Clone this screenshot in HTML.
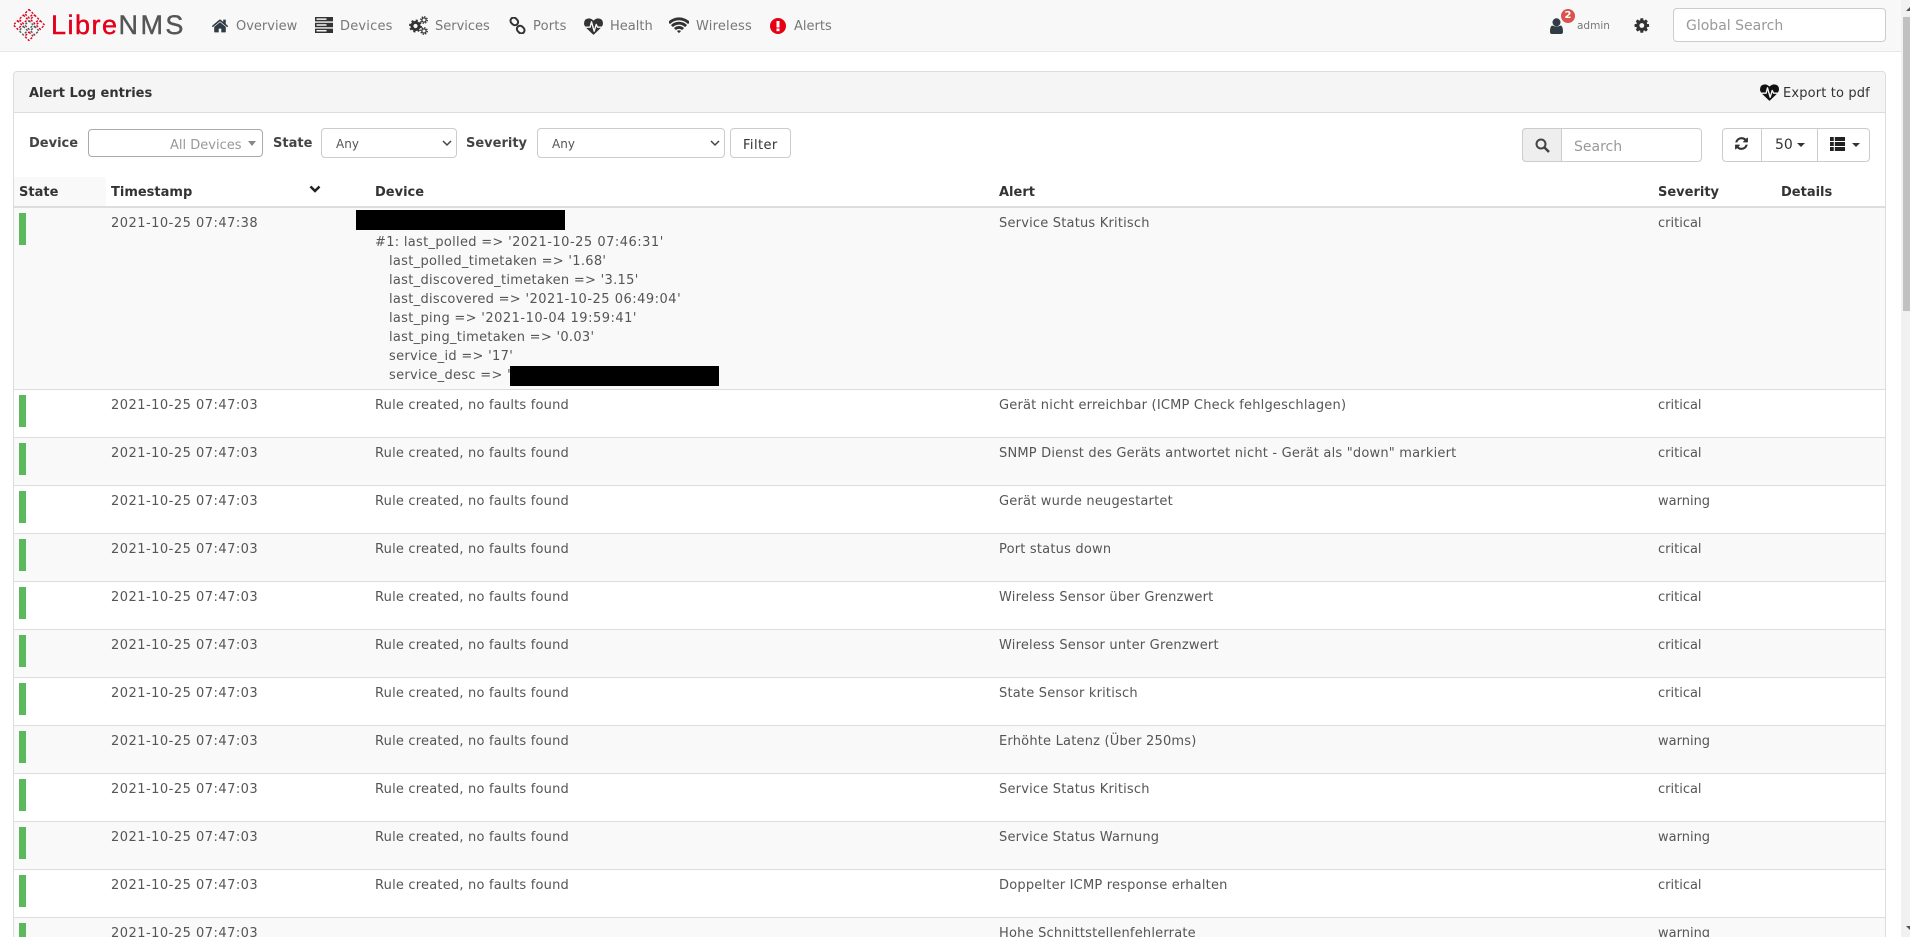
<!DOCTYPE html>
<html lang="en">
<head>
<meta charset="utf-8">
<title>Alert Log entries</title>
<style>
*{box-sizing:border-box}
html,body{margin:0;padding:0;width:1910px;height:937px;overflow:hidden;background:#fff}
body{position:relative;font-family:"DejaVu Sans","Liberation Sans",sans-serif;font-size:13px;color:#555}
.a{position:absolute;white-space:pre;line-height:20px}
svg{position:absolute;display:block}
#nav{position:absolute;left:0;top:0;width:1901px;height:52px;background:#f8f8f8;border-bottom:1px solid #e7e7e7}
.n{color:#777;top:17px}
.panel{position:absolute;left:13px;top:71px;width:1873px;height:880px;border:1px solid #ddd;border-radius:4px;background:#fff}
.head{position:absolute;left:14px;top:72px;width:1871px;height:41px;background:#f5f5f5;border-bottom:1px solid #ddd;border-radius:3px 3px 0 0}
.b{font-weight:bold;color:#333}
.box{position:absolute;border:1px solid #ccc;border-radius:4px;background:#fff}
.row{position:absolute;left:14px;width:1871px;height:48px;border-top:1px solid #ddd}
.o{background:#f9f9f9}
.e{background:#fff}
.row i{position:absolute;left:5px;top:5px;width:7px;height:32px;background:#5cb85c}
.row span{position:absolute;top:6px;line-height:20px;white-space:pre;color:#555}
.t{left:97px;letter-spacing:.48px}
.d{left:361px;letter-spacing:.2px}
.l{left:985px;letter-spacing:.2px}
.s{left:1644px}
.dl{letter-spacing:.3px;color:#555}
.dl u{text-decoration:none;letter-spacing:.5px}
</style>
</head>
<body>
<div id="nav"></div>

<!-- logo -->
<svg style="left:13px;top:9px" width="32" height="32" viewBox="0 0 32 32">
<g transform="rotate(45 16 16)" fill="none" stroke-width="1.400" stroke-dasharray="2.200 1.600">
<rect x="5" y="5" width="6" height="6" stroke="#e2001a"/>
<rect x="13" y="5" width="6" height="6" stroke="#e2001a"/>
<rect x="21" y="5" width="6" height="6" stroke="#e2001a"/>
<rect x="5" y="13" width="6" height="6" stroke="#e2001a"/>
<rect x="13" y="13" width="6" height="6" stroke="#555"/>
<rect x="21" y="13" width="6" height="6" stroke="#555"/>
<rect x="5" y="21" width="6" height="6" stroke="#e2001a"/>
<rect x="13" y="21" width="6" height="6" stroke="#555"/>
<rect x="21" y="21" width="6" height="6" stroke="#e2001a"/>
</g>
</svg>
<div class="a" style="left:51px;top:10px;font:27px/30px 'Liberation Sans',sans-serif;letter-spacing:1.500px;color:#e2001a;-webkit-text-stroke:.4px #e2001a">Libre<span style="color:#555;-webkit-text-stroke:.4px #555;letter-spacing:2.400px">NMS</span></div>

<!-- nav icons -->
<svg style="left:211px;top:17px" width="18" height="18" viewBox="0 0 1792 1792"><path fill="#2f3b45" d="M1472 992v480q0 26-19 45t-45 19h-384v-384h-256v384h-384q-26 0-45-19t-19-45v-480q0-1 .5-3t.5-3l575-474 575 474q1 2 1 6zm223-69l-62 74q-8 9-21 11h-3q-13 0-21-7l-692-577-692 577q-12 8-24 7-13-2-21-11l-62-74q-8-10-7-23.5t11-21.5l719-599q32-26 76-26t76 26l244 204v-195q0-14 9-23t23-9h192q14 0 23 9t9 23v408l219 182q10 8 11 21.5t-7 23.5z"/></svg>
<div class="a n" style="left:236px">Overview</div>

<svg style="left:315px;top:17px" width="18" height="16" viewBox="0 0 18 16"><g fill="#333"><path d="M0 0h18v4.400H0zM0 5.800h18v4.400H0zM0 11.600h18V16H0z"/></g><g fill="#f8f8f8"><path d="M1.500 1.400h10v1.500h-10zM1.500 7.200h10v1.500h-10zM1.500 13h10v1.500h-10z"/></g></svg>
<div class="a n" style="left:340px;letter-spacing:.2px">Devices</div>

<svg style="left:409px;top:16px" width="19" height="19" viewBox="0 0 19 19" fill="none" stroke="#333">
<circle cx="6.500" cy="10" r="3.600" stroke-width="3"/><circle cx="6.500" cy="10" r="5.600" stroke-width="1.800" stroke-dasharray="2.100 2.300"/>
<circle cx="15" cy="4" r="2.100" stroke-width="1.200"/><circle cx="15" cy="4" r="3.300" stroke-width="1.200" stroke-dasharray="1.400 1.200"/>
<circle cx="15" cy="15" r="2.100" stroke-width="1.200"/><circle cx="15" cy="15" r="3.300" stroke-width="1.200" stroke-dasharray="1.400 1.200"/>
</svg>
<div class="a n" style="left:435px">Services</div>

<svg style="left:509px;top:17px" width="17" height="17" viewBox="0 0 17 17" fill="none" stroke="#333" stroke-width="2"><rect x="1.200" y="1.200" width="8.200" height="6.400" rx="3.200" transform="rotate(45 5.300 4.400)"/><rect x="7.600" y="9.400" width="8.200" height="6.400" rx="3.200" transform="rotate(45 11.700 12.600)"/></svg>
<div class="a n" style="left:533px;letter-spacing:.2px">Ports</div>

<svg style="left:584px;top:17px" width="19" height="19" viewBox="0 0 1792 1792"><path fill="#333" d="M1280 1024h305q-5 6-10 10.500t-9 7.500l-3 4-623 600q-18 18-44 18t-44-18l-624-602q-5-2-21-20h369q22 0 39.500-13.500t22.500-34.500l70-281 190 667q6 20 23 33t39 13q21 0 38-13t23-33l146-485 56 112q18 35 57 35zm512-428q0 145-103 300h-369l-111-221q-8-17-25.500-27t-36.500-8q-45 5-56 46l-129 430-196-686q-6-20-23.500-33t-39.500-13-39 13.500-22 34.500l-116 464h-423q-103-155-103-300 0-220 127-344t351-124q62 0 126.500 21.500t120 58 95.500 68.500 76 68q36-36 76-68t95.500-68.500 120-58 126.500-21.500q224 0 351 124t127 344z"/></svg>
<div class="a n" style="left:610px">Health</div>

<svg style="left:669px;top:16px" width="20" height="20" viewBox="0 0 1792 1792"><path fill="#333" d="M896 1523q-20 0-93-73.500t-73-93.500q0-32 62.500-54t103.500-22 103.500 22 62.500 54q0 20-73 93.500t-93 73.500zm270-271q-2 0-40-25t-101.500-50-128.500-25-128.500 25-101 50-40.500 25q-18 0-93.500-75t-75.500-93q0-13 10-23 78-77 196-121t233-44 233 44 196 121q10 10 10 23 0 18-75.500 93t-93.500 75zm273-272q-11 0-23-8-136-105-252-154.500t-268-49.500q-85 0-170.500 22t-149 53-113.500 62-79 53-31 22q-17 0-92-75t-75-93q0-12 10-22 132-132 320-205t380-73 380 73 320 205q10 10 10 22 0 18-75 93t-92 75zm271-271q-11 0-22-9-179-157-371.500-236.500t-420.500-79.500-420.500 79.500-371.500 236.500q-11 9-22 9-17 0-92.500-75t-75.500-93q0-13 10-23 187-186 445-288t527-102 527 102 445 288q10 10 10 23 0 18-75.500 93t-92.500 75z"/></svg>
<div class="a n" style="left:696px;letter-spacing:.2px">Wireless</div>

<svg style="left:770px;top:18px" width="16" height="16" viewBox="0 0 16 16"><circle cx="8" cy="8" r="8" fill="#e60012"/><rect x="6.500" y="3" width="3" height="6.500" fill="#fff"/><rect x="6.500" y="10.500" width="3" height="2.700" fill="#fff"/></svg>
<div class="a n" style="left:794px">Alerts</div>

<!-- right nav -->
<svg style="left:1550px;top:18px" width="13" height="16" viewBox="0 0 13 16"><circle cx="6.500" cy="4.300" r="4" fill="#2f3b45"/><path fill="#2f3b45" d="M2.300 7.500C3.500 8.700 9.500 8.700 10.700 7.500 12.300 8 13 10 13 14c0 1.200-.8 2-2 2H2c-1.200 0-2-.8-2-2C0 10 .7 8 2.300 7.500z"/></svg>
<div style="position:absolute;left:1561px;top:9px;width:14px;height:14px;border-radius:7px;background:#d9534f;color:#fff;font-weight:bold;font-size:10px;line-height:14px;text-align:center">2</div>
<div class="a" style="left:1577px;top:16px;font-size:10.500px;color:#777">admin</div>
<svg style="left:1633px;top:17px" width="17" height="17" viewBox="0 0 1792 1792"><path fill="#333" transform="translate(32 0)" d="M1152 896q0-106-75-181t-181-75-181 75-75 181 75 181 181 75 181-75 75-181zm512-109v222q0 12-8 23t-20 13l-185 28q-19 54-39 91 35 50 107 138 10 12 10 25t-9 23q-27 37-99 108t-94 71q-12 0-26-9l-138-108q-44 23-91 38-16 136-29 186-7 28-36 28h-222q-14 0-24.500-8.500t-11.500-21.500l-28-184q-49-16-90-37l-141 107q-10 9-25 9-14 0-25-11-126-114-165-168-7-10-7-23 0-12 8-23 15-21 51-66.500t54-70.500q-27-50-41-99l-183-27q-13-2-21-12.500t-8-23.500v-222q0-12 8-23t19-13l186-28q14-46 39-92-40-57-107-138-10-12-10-24 0-10 9-23 26-36 98.500-107.500t94.500-71.500q13 0 26 10l138 107q44-23 91-38 16-136 29-186 7-28 36-28h222q14 0 24.500 8.500t11.500 21.500l28 184q49 16 90 37l142-107q9-9 24-9 13 0 25 10 129 119 165 170 7 8 7 22 0 12-8 23-15 21-51 66.500t-54 70.500q26 50 41 98l183 28q13 2 21 12.500t8 23.500z"/></svg>
<div class="box" style="left:1673px;top:8px;width:213px;height:34px"></div>
<div class="a" style="left:1686px;top:16px;font-size:14px;color:#999">Global Search</div>

<!-- panel -->
<div class="panel"></div>
<div class="head"></div>
<div class="a b" style="left:29px;top:84px">Alert Log entries</div>
<svg style="left:1760px;top:83px" width="19" height="19" viewBox="0 0 1792 1792"><path fill="#111" d="M1280 1024h305q-5 6-10 10.500t-9 7.500l-3 4-623 600q-18 18-44 18t-44-18l-624-602q-5-2-21-20h369q22 0 39.500-13.500t22.500-34.500l70-281 190 667q6 20 23 33t39 13q21 0 38-13t23-33l146-485 56 112q18 35 57 35zm512-428q0 145-103 300h-369l-111-221q-8-17-25.500-27t-36.500-8q-45 5-56 46l-129 430-196-686q-6-20-23.500-33t-39.500-13-39 13.500-22 34.500l-116 464h-423q-103-155-103-300 0-220 127-344t351-124q62 0 126.500 21.500t120 58 95.500 68.500 76 68q36-36 76-68t95.500-68.500 120-58 126.500-21.500q224 0 351 124t127 344z"/></svg>
<div class="a" style="left:1783px;top:84px;color:#333;letter-spacing:.15px">Export to pdf</div>

<!-- filter -->
<div class="a b" style="left:29px;top:134px;color:#444">Device</div>
<div class="box" style="left:88px;top:129px;width:175px;height:28px;border-color:#aaa"></div>
<div class="a" style="left:170px;top:136px;color:#999">All Devices</div>
<div style="position:absolute;left:248px;top:141px;border-left:4px solid transparent;border-right:4px solid transparent;border-top:5px solid #888"></div>
<div class="a b" style="left:273px;top:134px;color:#444">State</div>
<div class="box" style="left:321px;top:128px;width:136px;height:30px"></div>
<div class="a" style="left:336px;top:134px;font-size:12px">Any</div>
<svg style="left:442px;top:140px" width="10" height="7" viewBox="0 0 10 7"><path d="M1 1l4 4 4-4" fill="none" stroke="#444" stroke-width="1.500"/></svg>
<div class="a b" style="left:466px;top:134px;color:#444">Severity</div>
<div class="box" style="left:537px;top:128px;width:188px;height:30px"></div>
<div class="a" style="left:552px;top:134px;font-size:12px">Any</div>
<svg style="left:710px;top:140px" width="10" height="7" viewBox="0 0 10 7"><path d="M1 1l4 4 4-4" fill="none" stroke="#444" stroke-width="1.500"/></svg>
<div class="box" style="left:730px;top:128px;width:61px;height:30px"></div>
<div class="a" style="left:743px;top:136px;color:#333;letter-spacing:.4px">Filter</div>

<!-- search -->
<div class="box" style="left:1522px;top:128px;width:180px;height:34px"></div>
<div style="position:absolute;left:1522px;top:128px;width:40px;height:34px;background:#eee;border:1px solid #ccc;border-radius:4px 0 0 4px"></div>
<svg style="left:1535px;top:138px" width="15" height="15" viewBox="0 0 15 15" fill="none" stroke="#444"><circle cx="6" cy="6" r="4.500" stroke-width="2"/><path d="M9.500 9.500l4.500 4.500" stroke-width="2.500"/></svg>
<div class="a" style="left:1574px;top:137px;font-size:14px;color:#999">Search</div>

<div class="box" style="left:1722px;top:128px;width:148px;height:34px"></div>
<div style="position:absolute;left:1761px;top:128px;width:1px;height:34px;background:#ccc"></div>
<div style="position:absolute;left:1817px;top:128px;width:1px;height:34px;background:#ccc"></div>
<svg style="left:1734px;top:136px" width="15" height="15" viewBox="0 0 1792 1792"><path fill="#333" d="M1639 1056q0 5-1 7-64 268-268 434.500t-478 166.500q-146 0-282.500-55t-243.500-157l-129 129q-19 19-45 19t-45-19-19-45v-448q0-26 19-45t45-19h448q26 0 45 19t19 45-19 45l-137 137q71 66 161 102t187 36q134 0 250-65t186-179q11-17 53-117 8-23 30-23h192q13 0 22.500 9.500t9.500 22.500zm25-800v448q0 26-19 45t-45 19h-448q-26 0-45-19t-19-45 19-45l138-138q-148-137-349-137-134 0-250 65t-186 179q-11 17-53 117-8 23-30 23h-199q-13 0-22.500-9.500t-9.500-22.500v-7q65-268 270-434.500t480-166.500q146 0 284 55.500t245 156.500l130-129q19-19 45-19t45 19 19 45z"/></svg>
<div class="a" style="left:1775px;top:135px;font-size:14px;color:#333">50</div>
<div style="position:absolute;left:1797px;top:143px;border-left:4px solid transparent;border-right:4px solid transparent;border-top:4px solid #333"></div>
<svg style="left:1830px;top:137px" width="15" height="14" viewBox="0 0 14 12" preserveAspectRatio="none"><path fill="#222" d="M0 0h3.500v3.400H0zM4.500 0H14v3.400H4.500zM0 4.300h3.500v3.400H0zM4.500 4.300H14v3.400H4.500zM0 8.600h3.500V12H0zM4.500 8.600H14V12H4.500z"/></svg>
<div style="position:absolute;left:1852px;top:143px;border-left:4px solid transparent;border-right:4px solid transparent;border-top:4px solid #333"></div>

<!-- table header -->
<div style="position:absolute;left:14px;top:177px;width:92px;height:29px;background:#f9f9f9"></div>
<div class="a b" style="left:19px;top:183px">State</div>
<div class="a b" style="left:111px;top:183px">Timestamp</div>
<svg style="left:309px;top:185px" width="12" height="9" viewBox="0 0 12 9"><path d="M1.500 1.500L6 6l4.500-4.500" fill="none" stroke="#222" stroke-width="2.500"/></svg>
<div class="a b" style="left:375px;top:183px">Device</div>
<div class="a b" style="left:999px;top:183px">Alert</div>
<div class="a b" style="left:1658px;top:183px">Severity</div>
<div class="a b" style="left:1781px;top:183px">Details</div>
<div style="position:absolute;left:14px;top:206px;width:1871px;height:2px;background:#ddd"></div>

<!-- first row -->
<div class="row o" style="top:208px;height:181px;border-top:0"><i></i><span class="t">2021-10-25 07:47:38</span><span class="l">Service Status Kritisch</span><span class="s">critical</span></div>
<div class="a dl" style="left:375px;top:233px">#1: last_polled =&gt; <u>'2021-10-25 07:46:31'</u></div>
<div class="a dl" style="left:389px;top:252px">last_polled_timetaken =&gt; '1.68'</div>
<div class="a dl" style="left:389px;top:271px">last_discovered_timetaken =&gt; '3.15'</div>
<div class="a dl" style="left:389px;top:290px">last_discovered =&gt; <u>'2021-10-25 06:49:04'</u></div>
<div class="a dl" style="left:389px;top:309px">last_ping =&gt; <u>'2021-10-04 19:59:41'</u></div>
<div class="a dl" style="left:389px;top:328px">last_ping_timetaken =&gt; '0.03'</div>
<div class="a dl" style="left:389px;top:347px">service_id =&gt; '17'</div>
<div class="a dl" style="left:389px;top:366px">service_desc =&gt; '</div>
<div style="position:absolute;left:356px;top:210px;width:209px;height:20px;background:#000"></div>
<div style="position:absolute;left:510px;top:366px;width:209px;height:20px;background:#000"></div>

<!-- rows -->
<div class="row e" style="top:389px"><i></i><span class="t">2021-10-25 07:47:03</span><span class="d">Rule created, no faults found</span><span class="l">Gerät nicht erreichbar (ICMP Check fehlgeschlagen)</span><span class="s">critical</span></div>
<div class="row o" style="top:437px"><i></i><span class="t">2021-10-25 07:47:03</span><span class="d">Rule created, no faults found</span><span class="l">SNMP Dienst des Geräts antwortet nicht - Gerät als "down" markiert</span><span class="s">critical</span></div>
<div class="row e" style="top:485px"><i></i><span class="t">2021-10-25 07:47:03</span><span class="d">Rule created, no faults found</span><span class="l">Gerät wurde neugestartet</span><span class="s">warning</span></div>
<div class="row o" style="top:533px"><i></i><span class="t">2021-10-25 07:47:03</span><span class="d">Rule created, no faults found</span><span class="l">Port status down</span><span class="s">critical</span></div>
<div class="row e" style="top:581px"><i></i><span class="t">2021-10-25 07:47:03</span><span class="d">Rule created, no faults found</span><span class="l">Wireless Sensor über Grenzwert</span><span class="s">critical</span></div>
<div class="row o" style="top:629px"><i></i><span class="t">2021-10-25 07:47:03</span><span class="d">Rule created, no faults found</span><span class="l">Wireless Sensor unter Grenzwert</span><span class="s">critical</span></div>
<div class="row e" style="top:677px"><i></i><span class="t">2021-10-25 07:47:03</span><span class="d">Rule created, no faults found</span><span class="l">State Sensor kritisch</span><span class="s">critical</span></div>
<div class="row o" style="top:725px"><i></i><span class="t">2021-10-25 07:47:03</span><span class="d">Rule created, no faults found</span><span class="l">Erhöhte Latenz (Über 250ms)</span><span class="s">warning</span></div>
<div class="row e" style="top:773px"><i></i><span class="t">2021-10-25 07:47:03</span><span class="d">Rule created, no faults found</span><span class="l">Service Status Kritisch</span><span class="s">critical</span></div>
<div class="row o" style="top:821px"><i></i><span class="t">2021-10-25 07:47:03</span><span class="d">Rule created, no faults found</span><span class="l">Service Status Warnung</span><span class="s">warning</span></div>
<div class="row e" style="top:869px"><i></i><span class="t">2021-10-25 07:47:03</span><span class="d">Rule created, no faults found</span><span class="l">Doppelter ICMP response erhalten</span><span class="s">critical</span></div>
<div class="row o" style="top:917px"><i></i><span class="t">2021-10-25 07:47:03</span><span class="l">Hohe Schnittstellenfehlerrate</span><span class="s">warning</span></div>

<!-- scrollbar -->
<div style="position:absolute;left:1901px;top:0;width:9px;height:937px;background:#f1f1f1"></div>
<div style="position:absolute;left:1903px;top:17px;width:7px;height:294px;background:#c1c1c1"></div>
<div style="position:absolute;left:1906px;top:7px;border-left:4px solid transparent;border-right:4px solid transparent;border-bottom:4px solid #505050"></div>
<div style="position:absolute;left:1906px;top:926px;border-left:4px solid transparent;border-right:4px solid transparent;border-top:4px solid #505050"></div>
</body>
</html>
